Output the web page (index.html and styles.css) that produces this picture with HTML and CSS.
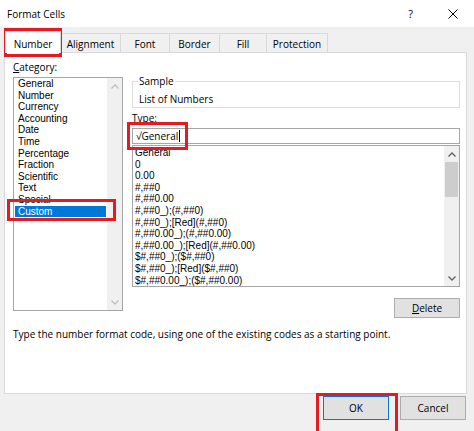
FILE: index.html
```html
<!DOCTYPE html>
<html>
<head>
<meta charset="utf-8">
<title>Format Cells</title>
<link rel="stylesheet" href="styles.css">
</head>
<body>
<div class="window">
  <div class="titlebar">
    <span class="title">Format Cells</span>
    <span class="help">?</span>
    <svg class="close" width="10" height="10" viewBox="0 0 10 10"><path d="M0.5 0.5 L9.5 9.5 M9.5 0.5 L0.5 9.5" stroke="#000" stroke-width="1" fill="none"/></svg>
  </div>
  <div class="tabstrip">
    <div class="tab tab-active">Number</div>
    <div class="tab">Alignment</div>
    <div class="tab">Font</div>
    <div class="tab">Border</div>
    <div class="tab">Fill</div>
    <div class="tab">Protection</div>
  </div>
  <div class="panel">
    <div class="cat-col">
      <div class="label"><u>C</u>ategory:</div>
      <div class="listbox cat-list">
        <div class="items">
          <div class="item">General</div>
          <div class="item">Number</div>
          <div class="item">Currency</div>
          <div class="item">Accounting</div>
          <div class="item">Date</div>
          <div class="item">Time</div>
          <div class="item">Percentage</div>
          <div class="item">Fraction</div>
          <div class="item">Scientific</div>
          <div class="item">Text</div>
          <div class="item">Special</div>
          <div class="item item-selected">Custom</div>
        </div>
        <div class="vscroll vscroll-disabled">
          <div class="sbtn"><svg width="8" height="5" viewBox="0 0 8 5"><path d="M0.5 4.5 L4 1 L7.5 4.5" fill="none" stroke="currentColor" stroke-width="1.3"/></svg></div>
          <div class="sbtn"><svg width="8" height="5" viewBox="0 0 8 5"><path d="M0.5 0.5 L4 4 L7.5 0.5" fill="none" stroke="currentColor" stroke-width="1.3"/></svg></div>
        </div>
      </div>
    </div>
    <div class="main-col">
      <fieldset class="sample">
        <legend>Sample</legend>
        <div class="sample-value">List of Numbers</div>
      </fieldset>
      <div class="label type-label"><u>T</u>ype:</div>
      <div class="type-input">√General<span class="caret"></span></div>
      <div class="listbox fmt-list">
        <div class="items fmt-items">
          <div class="item">General</div>
          <div class="item">0</div>
          <div class="item">0.00</div>
          <div class="item">#,##0</div>
          <div class="item">#,##0.00</div>
          <div class="item">#,##0_);(#,##0)</div>
          <div class="item">#,##0_);[Red](#,##0)</div>
          <div class="item">#,##0.00_);(#,##0.00)</div>
          <div class="item">#,##0.00_);[Red](#,##0.00)</div>
          <div class="item">$#,##0_);($#,##0)</div>
          <div class="item">$#,##0_);[Red]($#,##0)</div>
          <div class="item">$#,##0.00_);($#,##0.00)</div>
        </div>
        <div class="vscroll">
          <div class="sbtn"><svg width="8" height="5" viewBox="0 0 8 5"><path d="M0.5 4.5 L4 1 L7.5 4.5" fill="none" stroke="currentColor" stroke-width="1.3"/></svg></div>
          <div class="thumb"></div>
          <div class="track"></div>
          <div class="sbtn"><svg width="8" height="5" viewBox="0 0 8 5"><path d="M0.5 0.5 L4 4 L7.5 0.5" fill="none" stroke="currentColor" stroke-width="1.3"/></svg></div>
        </div>
      </div>
      <button class="btn btn-delete"><u>D</u>elete</button>
    </div>
    <p class="hint">Type the number format code, using one of the existing codes as a starting point.</p>
  </div>
  <div class="footer">
    <button class="btn btn-ok">OK</button>
    <button class="btn btn-cancel">Cancel</button>
  </div>
</div>
<div class="mark mark-tab"></div>
<div class="mark mark-type"></div>
<div class="mark mark-custom"></div>
<div class="mark mark-ok"></div>
</body>
</html>
```

FILE: styles.css
```css
html, body {
  margin: 0;
  padding: 0;
}
body {
  width: 474px;
  height: 431px;
  overflow: hidden;
  position: relative;
  background: #f0f0f0;
  font-family: "Open Sans", "Noto Sans", sans-serif;
  font-size: 10px;
  color: #000;
}
.window {
  display: flex;
  flex-direction: column;
  height: 431px;
}
.titlebar {
  height: 27px;
  flex: none;
  background: #fff;
  display: flex;
  align-items: center;
  padding: 0 16px 0 7px;
  box-sizing: border-box;
}
.title {
  flex: 1;
  font-size: 10px;
}
.help {
  font-size: 11px;
  margin-right: 35px;
}
.close {
  display: block;
}
.tabstrip {
  height: 25px;
  flex: none;
  box-sizing: border-box;
  padding-left: 5px;
  display: grid;
  grid-template-columns: 56px 60px 49px 50px 47px 61px;
  align-items: end;
  justify-content: start;
}
.tab {
  height: 19px;
  box-sizing: border-box;
  border-top: 1px solid #d9d9d9;
  border-right: 1px solid #d9d9d9;
  background: #f0f0f0;
  text-align: center;
  line-height: 14px;
  padding-top: 3px;
}
.tab-active {
  height: 22px;
  margin-bottom: -1px;
  padding-top: 5px;
  background: #fff;
  border-left: 1px solid #d9d9d9;
  position: relative;
  z-index: 1;
}
.panel {
  flex: none;
  height: 342px;
  box-sizing: border-box;
  margin: 0 7px 0 4px;
  border: 1px solid #d9d9d9;
  background: #fff;
  display: grid;
  grid-template-columns: 110px 328px;
  column-gap: 9px;
  align-content: start;
  padding: 7px 0 0 8px;
}
.label {
  line-height: 14px;
  margin-bottom: 3px;
}
.listbox {
  display: flex;
  box-sizing: border-box;
  border: 1px solid #a6a6a6;
  background: #fff;
}
.cat-list {
  height: 234px;
}
.items {
  flex: 1;
  min-width: 0;
}
.item {
  font-family: "Liberation Sans", Arial, sans-serif;
  font-size: 10px;
  line-height: 11.6px;
  height: 11.6px;
  white-space: nowrap;
  padding-left: 3px;
  margin: 0 1px;
}
.item-selected {
  background: #0078d7;
  color: #fff;
}
.vscroll {
  width: 15px;
  flex: none;
  background: #f0f0f0;
  display: flex;
  flex-direction: column;
  justify-content: space-between;
  color: #606060;
}
.vscroll-disabled {
  color: #bfbfbf;
}
.sbtn {
  height: 16px;
  display: flex;
  align-items: center;
  justify-content: center;
}
.sbtn svg {
  display: block;
}
.thumb {
  height: 35px;
  flex: none;
  background: #cdcdcd;
  margin: 0 1px;
}
.track {
  flex: 1;
}
.main-col {
  display: flex;
  flex-direction: column;
}
.sample {
  margin: 14px 0 0;
  padding: 0 5px;
  border: 1px solid #dcdcdc;
  min-width: 0;
}
.sample legend {
  padding: 0 1px;
  line-height: 14px;
}
.sample-value {
  line-height: 14px;
  padding: 4px 0 1px 1px;
}
.type-label {
  margin-top: 3px;
}
.type-input {
  height: 16px;
  box-sizing: border-box;
  border: 1px solid #a6a6a6;
  line-height: 14px;
  padding-left: 3px;
  display: flex;
  align-items: center;
}
.caret {
  display: inline-block;
  width: 1px;
  height: 12px;
  background: #000;
  margin-left: 1px;
}
.fmt-list {
  margin-top: 1px;
  height: 142px;
}
.fmt-items {
  padding-top: 1px;
}
.fmt-items .item {
  margin: 0;
  padding-left: 2px;
}
.btn {
  font-family: inherit;
  font-size: 10px;
  color: #000;
  background: #e1e1e1;
  border: 1px solid #adadad;
  border-radius: 0;
  padding: 0;
  margin: 0;
}
.btn-delete {
  align-self: flex-end;
  width: 66px;
  height: 20px;
  margin-top: 11px;
}
.hint {
  grid-column: 1 / -1;
  margin: 9px 0 0;
  line-height: 14px;
}
.footer {
  flex: 1;
  display: flex;
  justify-content: flex-end;
  align-items: flex-start;
  gap: 11px;
  padding: 2px 8px 0 0;
}
.btn-ok,
.btn-cancel {
  width: 66px;
  height: 24px;
}
.btn-ok {
  border-color: #0078d7;
}
.mark {
  position: absolute;
  border: 3px solid #e31b23;
  box-sizing: border-box;
  pointer-events: none;
}
.mark-tab {
  left: 4px;
  top: 28px;
  width: 58px;
  height: 29px;
}
.mark-type {
  left: 127px;
  top: 122px;
  width: 61px;
  height: 28px;
}
.mark-custom {
  left: 7px;
  top: 199px;
  width: 109px;
  height: 22px;
}
.mark-ok {
  left: 316px;
  top: 393px;
  width: 82px;
  height: 45px;
}
```
